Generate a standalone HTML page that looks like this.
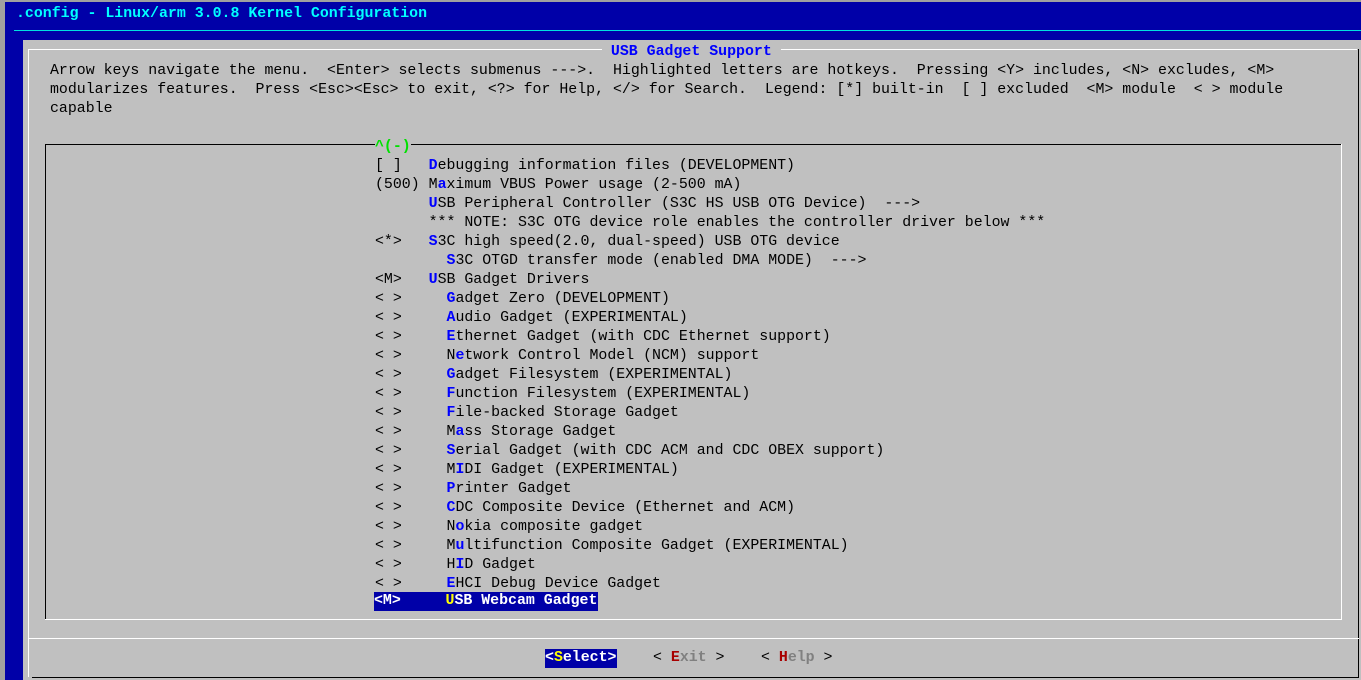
<!DOCTYPE html>
<html><head><meta charset="utf-8"><style>
html,body{margin:0;padding:0}
body{width:1361px;height:680px;overflow:hidden;position:relative;background:#0000a8;font-family:"Liberation Mono",monospace;font-size:14.9px}
.a{position:absolute;white-space:pre;margin:0;font:inherit;line-height:19px}
.k{color:#0000ff;font-weight:bold}
.bl{position:absolute}
</style></head><body>
<div class="bl" style="left:0;top:0;width:5px;height:680px;background:#a0a0a0"></div>
<div class="bl" style="left:0;top:0;width:1361px;height:2px;background:#a0a0a0"></div>
<div class="a" style="left:16px;top:5px;color:#00ffff;font-weight:bold">.config - Linux/arm 3.0.8 Kernel Configuration</div>
<div class="bl" style="left:14px;top:30px;width:1347px;height:1px;background:#00e0e0"></div>
<div class="bl" style="left:23px;top:40px;width:1338px;height:640px;background:#c0c0c0"></div>
<div class="bl" style="left:28px;top:49px;width:1329px;height:1px;background:#fff"></div>
<div class="bl" style="left:28px;top:49px;width:1px;height:628px;background:#fff"></div>
<div class="bl" style="left:1358px;top:49px;width:1px;height:628px;background:#000"></div>
<div class="bl" style="left:32px;top:677px;width:1327px;height:1px;background:#000"></div>
<div class="a" style="left:602px;top:43px;color:#0000ff;font-weight:bold;background:#c0c0c0"> USB Gadget Support </div>
<div class="a" style="left:50px;top:62px;color:#000">Arrow keys navigate the menu.  &lt;Enter&gt; selects submenus ---&gt;.  Highlighted letters are hotkeys.  Pressing &lt;Y&gt; includes, &lt;N&gt; excludes, &lt;M&gt;
modularizes features.  Press &lt;Esc&gt;&lt;Esc&gt; to exit, &lt;?&gt; for Help, &lt;/&gt; for Search.  Legend: [*] built-in  [ ] excluded  &lt;M&gt; module  &lt; &gt; module
capable</div>
<div class="bl" style="left:45px;top:144px;width:1296px;height:1px;background:#000"></div>
<div class="bl" style="left:45px;top:144px;width:1px;height:476px;background:#000"></div>
<div class="bl" style="left:1341px;top:144px;width:1px;height:476px;background:#fff"></div>
<div class="bl" style="left:45px;top:619px;width:1297px;height:1px;background:#fff"></div>
<div class="a" style="left:375px;top:138px;color:#00e000;font-weight:bold;background:#c0c0c0">^(-)</div>
<div class="a" style="left:375px;top:157px;color:#000">[ ]   <span class="k">D</span>ebugging information files (DEVELOPMENT)
(500) M<span class="k">a</span>ximum VBUS Power usage (2-500 mA)
      <span class="k">U</span>SB Peripheral Controller (S3C HS USB OTG Device)  ---&gt;
      *** NOTE: S3C OTG device role enables the controller driver below ***
&lt;*&gt;   <span class="k">S</span>3C high speed(2.0, dual-speed) USB OTG device
        <span class="k">S</span>3C OTGD transfer mode (enabled DMA MODE)  ---&gt;
&lt;M&gt;   <span class="k">U</span>SB Gadget Drivers
&lt; &gt;     <span class="k">G</span>adget Zero (DEVELOPMENT)
&lt; &gt;     <span class="k">A</span>udio Gadget (EXPERIMENTAL)
&lt; &gt;     <span class="k">E</span>thernet Gadget (with CDC Ethernet support)
&lt; &gt;     N<span class="k">e</span>twork Control Model (NCM) support
&lt; &gt;     <span class="k">G</span>adget Filesystem (EXPERIMENTAL)
&lt; &gt;     <span class="k">F</span>unction Filesystem (EXPERIMENTAL)
&lt; &gt;     <span class="k">F</span>ile-backed Storage Gadget
&lt; &gt;     M<span class="k">a</span>ss Storage Gadget
&lt; &gt;     <span class="k">S</span>erial Gadget (with CDC ACM and CDC OBEX support)
&lt; &gt;     M<span class="k">I</span>DI Gadget (EXPERIMENTAL)
&lt; &gt;     <span class="k">P</span>rinter Gadget
&lt; &gt;     <span class="k">C</span>DC Composite Device (Ethernet and ACM)
&lt; &gt;     N<span class="k">o</span>kia composite gadget
&lt; &gt;     M<span class="k">u</span>ltifunction Composite Gadget (EXPERIMENTAL)
&lt; &gt;     H<span class="k">I</span>D Gadget
&lt; &gt;     <span class="k">E</span>HCI Debug Device Gadget</div>
<div class="a" style="left:374px;top:592px;color:#fff;font-weight:bold;background:#0000a8;padding-right:1px">&lt;M&gt;     <span style="color:#ffff00">U</span>SB Webcam Gadget</div>
<div class="bl" style="left:28px;top:638px;width:1331px;height:1px;background:#fff"></div>
<div class="a" style="left:545px;top:649px;color:#fff;font-weight:bold;background:#0000a8">&lt;<span style="color:#ffff00">S</span>elect&gt;</div>
<div class="a" style="left:653px;top:649px;color:#000">&lt; <span style="color:#a80000;font-weight:bold">E</span><span style="color:#808080;font-weight:bold">xit</span> &gt;</div>
<div class="a" style="left:761px;top:649px;color:#000">&lt; <span style="color:#a80000;font-weight:bold">H</span><span style="color:#808080;font-weight:bold">elp</span> &gt;</div>
</body></html>
